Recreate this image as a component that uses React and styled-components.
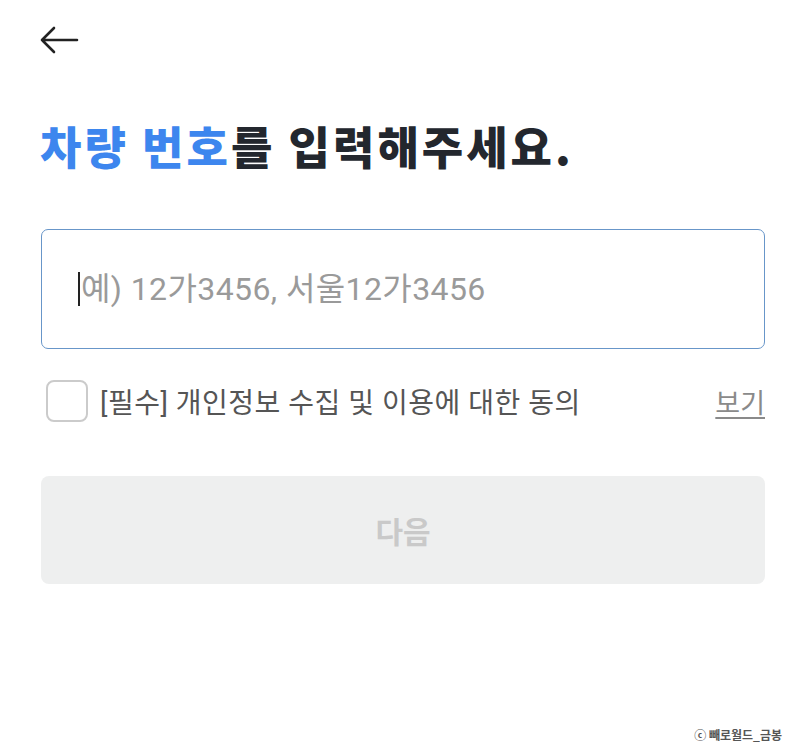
import React, { useState } from "react";
import styled, { createGlobalStyle } from "styled-components";

const GlobalStyle = createGlobalStyle`
  html, body {
    margin: 0;
    padding: 0;
    background: #ffffff;
  }
  body {
    font-family: Roboto, "Noto Sans CJK KR", sans-serif;
  }
  * {
    box-sizing: border-box;
  }
`;

const Page = styled.div`
  width: 800px;
  height: 755px;
  padding: 0 35px 0 41px;
  display: flex;
  flex-direction: column;
  position: relative;
  overflow: hidden;
`;

const BackButton = styled.button`
  width: 40px;
  height: 40px;
  margin-top: 20px;
  margin-left: -2px;
  padding: 0;
  border: none;
  background: none;
  display: flex;
  align-items: center;
  cursor: pointer;
`;

const Title = styled.h1`
  margin: 58px 0 0 -1px;
  font-family: "Noto Sans CJK KR", sans-serif;
  font-weight: 900;
  font-size: 45px;
  line-height: 56px;
  letter-spacing: 3px;
  color: #23272e;
  white-space: nowrap;
`;

const Highlight = styled.span`
  color: #3d86ee;
`;

const InputBox = styled.label`
  margin-top: 55px;
  height: 120px;
  border: 1.5px solid #6896c9;
  border-radius: 7px;
  display: flex;
  align-items: center;
  padding-left: 36px;
`;

const Caret = styled.span`
  width: 2px;
  height: 34px;
  background: #222;
  margin-right: 1px;
`;

const Field = styled.input`
  flex: 1;
  border: none;
  outline: none;
  background: transparent;
  font-family: Roboto, "Noto Sans CJK KR", sans-serif;
  font-size: 32px;
  color: #333;
  padding: 0;
  letter-spacing: 0.4px;

  &::placeholder {
    color: #9a9a9a;
  }
`;

const AgreeRow = styled.div`
  margin-top: 31px;
  display: flex;
  align-items: center;
  gap: 12px;
`;

const CheckBox = styled.span`
  width: 42px;
  height: 42px;
  margin-left: 5px;
  border: 2.5px solid ${(p) => (p.checked ? "#3d86ee" : "#cbcbcb")};
  background: ${(p) => (p.checked ? "#3d86ee" : "#fff")};
  border-radius: 8px;
  cursor: pointer;
`;

const AgreeText = styled.span`
  flex: 1;
  font-family: Roboto, "Noto Sans CJK KR", sans-serif;
  font-size: 28px;
  color: #555555;
  letter-spacing: 0.5px;
  white-space: nowrap;
`;

const ViewLink = styled.a`
  font-family: "Noto Sans CJK KR", sans-serif;
  font-size: 27px;
  color: #8a8a8a;
  text-decoration: underline;
  text-underline-offset: 4px;
  cursor: pointer;
`;

const NextButton = styled.button`
  margin-top: 54px;
  height: 108px;
  border: none;
  border-radius: 8px;
  background: #eeefef;
  font-family: "Noto Sans CJK KR", sans-serif;
  font-weight: 700;
  font-size: 30px;
  color: #c9c9c9;
`;

const Watermark = styled.div`
  position: absolute;
  right: 18px;
  bottom: 12px;
  font-family: "Noto Sans CJK KR", sans-serif;
  font-weight: 700;
  font-size: 12px;
  color: #555;
`;

const App = () => {
  const [agreed, setAgreed] = useState(false);

  return (
    <>
      <GlobalStyle />
      <Page>
        <BackButton aria-label="뒤로">
          <svg width="40" height="28" viewBox="0 0 40 28" fill="none">
            <path
              d="M38 14H3M15 2L3 14l12 12"
              stroke="#222"
              strokeWidth="2.6"
              strokeLinecap="round"
              strokeLinejoin="round"
            />
          </svg>
        </BackButton>
        <Title>
          <Highlight>차량 번호</Highlight>를 입력해주세요.
        </Title>
        <InputBox>
          <Caret />
          <Field placeholder="예) 12가3456, 서울12가3456" />
        </InputBox>
        <AgreeRow>
          <CheckBox checked={agreed} onClick={() => setAgreed(!agreed)} />
          <AgreeText>[필수] 개인정보 수집 및 이용에 대한 동의</AgreeText>
          <ViewLink>보기</ViewLink>
        </AgreeRow>
        <NextButton disabled>다음</NextButton>
        <Watermark>ⓒ 빼로월드_금봉</Watermark>
      </Page>
    </>
  );
};

export default App;
